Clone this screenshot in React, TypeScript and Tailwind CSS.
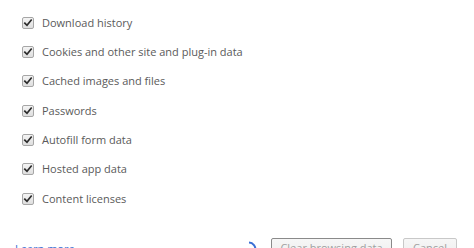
const items = [
  "Download history",
  "Cookies and other site and plug-in data",
  "Cached images and files",
  "Passwords",
  "Autofill form data",
  "Hosted app data",
  "Content licenses",
];

function CheckBox() {
  return (
    <span className="flex h-[12px] w-[12px] shrink-0 items-center justify-center rounded-[2px] border border-[#a6a6a6] bg-gradient-to-b from-[#f4f4f4] to-[#dedede]">
      <svg viewBox="0 0 12 12" className="h-[10px] w-[10px]">
        <path d="M2.2 6.2 L4.8 8.8 L9.8 2.6" fill="none" stroke="#2b2b2b" strokeWidth="2" strokeLinecap="square" />
      </svg>
    </span>
  );
}

export default function App() {
  return (
    <div className="h-[248px] w-[474px] overflow-hidden bg-white font-['Open_Sans','Segoe_UI',sans-serif] text-[11px] text-[#5a5a5a]">
      {/* checkbox list */}
      <div className="pl-[22px] pt-[8px]">
        {items.map((label) => (
          <label key={label} className="flex h-[29.33px] items-center gap-[8px]">
            <CheckBox />
            <span className="leading-[16px]">{label}</span>
          </label>
        ))}
      </div>

      {/* footer */}
      <div className="mt-[24.5px] flex items-start pl-[15px] pr-[17px]">
        <a className="mt-[3px] flex-1 leading-[16px] text-[#3b6fd1]">Learn more</a>
        <svg viewBox="0 0 16 16" className="mt-[2px] h-[16px] w-[16px] translate-x-[2px]">
          <path d="M4 2.6 A6.5 6.5 0 0 1 10.2 10.5" fill="none" stroke="#3a6fd4" strokeWidth="2" />
        </svg>
        <button className="ml-[12px] h-[26px] w-[121px] rounded-[2px] border border-[#8a8a8a] bg-gradient-to-b from-[#f6f6f6] to-[#ececec] pb-[5px] leading-[16px] text-[#a0a0a0]">
          Clear browsing data
        </button>
        <button className="ml-[11px] h-[26px] w-[54px] rounded-[2px] border border-[#c8c8c8] bg-gradient-to-b from-[#f6f6f6] to-[#ececec] pb-[5px] leading-[16px] text-[#a0a0a0]">
          Cancel
        </button>
      </div>
    </div>
  );
}
